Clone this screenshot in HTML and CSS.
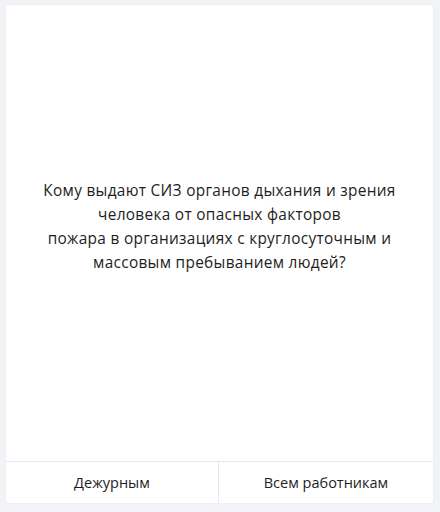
FILE: index.html
```html
<!DOCTYPE html>
<html lang="ru">
<head>
    <meta charset="UTF-8">
    <meta name="viewport" content="width=device-width, initial-scale=1.0">
    <title>Вопрос</title>
    <link rel="stylesheet" href="styles.css">
</head>
<body>
    <div class="quiz-card">
        <div class="quiz-question">
            <p class="question-text">Кому выдают СИЗ органов дыхания и зрения<br>человека от опасных факторов<br>пожара в организациях с круглосуточным и<br>массовым пребыванием людей?</p>
        </div>
        <div class="quiz-answers">
            <button class="answer-button">Дежурным</button>
            <button class="answer-button">Всем работникам</button>
        </div>
    </div>
</body>
</html>
```

FILE: styles.css
```css
* {
    box-sizing: border-box;
}

html, body {
    margin: 0;
    padding: 0;
    height: 100%;
    background-color: #f2f3f7;
    font-family: 'Open Sans', 'Noto Sans', sans-serif;
    color: #1e1e1e;
}

body {
    padding: 5px 7px 9px 6px;
}

.quiz-card {
    display: flex;
    flex-direction: column;
    height: 100%;
    background-color: #fff;
    border-radius: 3px;
    box-shadow: 0 0 2px rgba(0, 0, 0, 0.06);
}

.quiz-question {
    flex: 1;
    display: flex;
    align-items: center;
    justify-content: center;
    padding: 0 10px 12px;
}

.question-text {
    margin: 0;
    font-size: 15.4px;
    line-height: 24px;
    letter-spacing: 0.3px;
    text-align: center;
}

.quiz-answers {
    display: grid;
    grid-template-columns: 212px 1fr;
    height: 42px;
    border-top: 1px solid #e8e9ee;
}

.answer-button {
    background: none;
    border: none;
    font-family: inherit;
    font-size: 14.5px;
    color: #1e1e1e;
    cursor: pointer;
    padding: 0;
}

.answer-button + .answer-button {
    border-left: 1px solid #e8e9ee;
}
```
